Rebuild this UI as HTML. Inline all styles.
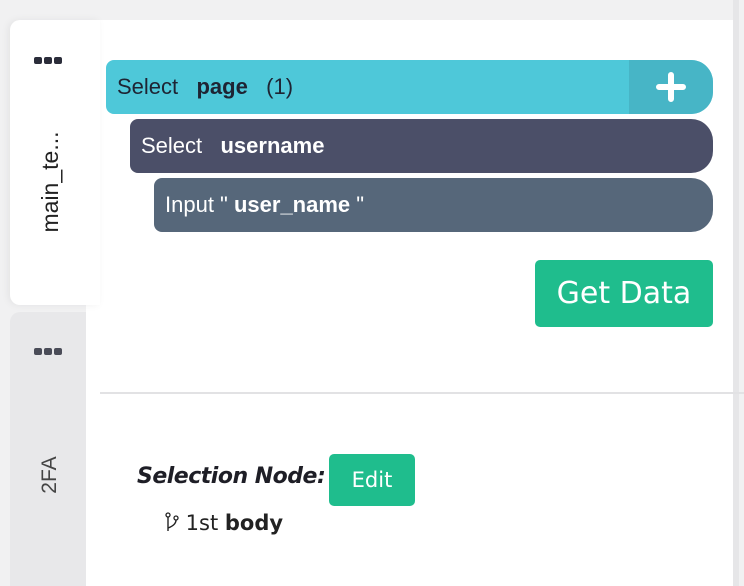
<!DOCTYPE html>
<html><head><style>
html,body{margin:0;width:744px;height:586px;overflow:hidden}
body{background:#f1f1f2;position:relative;font-family:"Liberation Sans",sans-serif}
.main{position:absolute;left:86px;top:20px;width:647px;height:566px;background:#fff}
.rstrip{position:absolute;left:733px;top:0;width:6px;height:586px;background:#e6e6e8}
.tab1{position:absolute;left:10px;top:20px;width:90px;height:285px;background:#fff;border-radius:10px 0 0 10px;box-shadow:-2px 0 8px rgba(0,0,0,.06)}
.tab2{position:absolute;left:10px;top:312px;width:76px;height:274px;background:#e8e8ea;border-radius:10px 0 0 0}
.dots{position:absolute;left:24px;width:40px;height:8px;white-space:nowrap;font-size:0}
.dots i{display:inline-block;width:8px;height:7px;border-radius:2px;background:#2b2d3a;margin-right:2px}
.vt{position:absolute;transform:rotate(-90deg);transform-origin:center;white-space:nowrap;font-size:21px;line-height:24px;color:#222}
.bar{position:absolute;height:54px;border-radius:8px 22px 22px 8px;font-size:22px;line-height:54px;box-sizing:border-box;padding-left:11px}
.sep{position:absolute;left:100px;top:392px;width:644px;height:2px;background:#e2e2e4}
.btn{position:absolute;background:#1fbd8d;color:#fff;border-radius:5px;text-align:center}
</style></head><body>
<div class="main"></div>
<div class="rstrip"></div>
<div class="tab1"><div class="dots" style="top:37px"><i></i><i></i><i></i></div>
<div class="vt" style="left:-15px;top:150px;width:110px;text-align:center;font-size:23px">main_te...</div></div>
<div class="tab2"><div class="dots" style="top:36px"><i style="background:#4a4c58"></i><i style="background:#4a4c58"></i><i style="background:#4a4c58"></i></div>
<div class="vt" style="left:10px;top:151px;width:60px;text-align:center;color:#444">2FA</div></div>
<div class="bar" style="left:106px;top:60px;width:607px;background:#4ec8d9;color:#1e2433;overflow:hidden">Select&nbsp;&nbsp; <b>page</b>&nbsp;&nbsp; (1)
<div style="position:absolute;left:523px;top:0;width:84px;height:54px;background:#47b5c6"><svg width="84" height="54"><path d="M42 15v24M30 27h24" stroke="#fff" stroke-width="6" stroke-linecap="round"/></svg></div></div>
<div class="bar" style="left:130px;top:119px;width:583px;background:#4b4f68;color:#fff">Select&nbsp;&nbsp; <b>username</b></div>
<div class="bar" style="left:154px;top:178px;width:559px;background:#56677a;color:#fff">Input " <b>user_name</b> "</div>
<div class="btn" style="left:535px;top:260px;width:178px;height:67px;line-height:67px;font-size:30px;font-family:'DejaVu Sans',sans-serif">Get Data</div>
<div class="sep"></div>
<div style="position:absolute;left:137px;top:464px;font-size:22px;font-weight:bold;font-style:italic;color:#1e1e26;font-family:'DejaVu Sans',sans-serif;letter-spacing:-0.5px">Selection Node:</div>
<div class="btn" style="left:329px;top:454px;width:86px;height:52px;line-height:52px;font-size:21px;font-family:'DejaVu Sans',sans-serif">Edit</div>
<div style="position:absolute;left:165px;top:511px;font-size:21px;color:#222;font-family:'DejaVu Sans',sans-serif"><svg width="14" height="20" style="vertical-align:-2px"><circle cx="3" cy="3" r="2" fill="none" stroke="#222" stroke-width="1.3"/><circle cx="11" cy="6" r="2" fill="none" stroke="#222" stroke-width="1.3"/><path d="M3 5v14M11 8q0 5-8 8" fill="none" stroke="#222" stroke-width="1.4"/></svg> 1st <b>body</b></div>
</body></html>
